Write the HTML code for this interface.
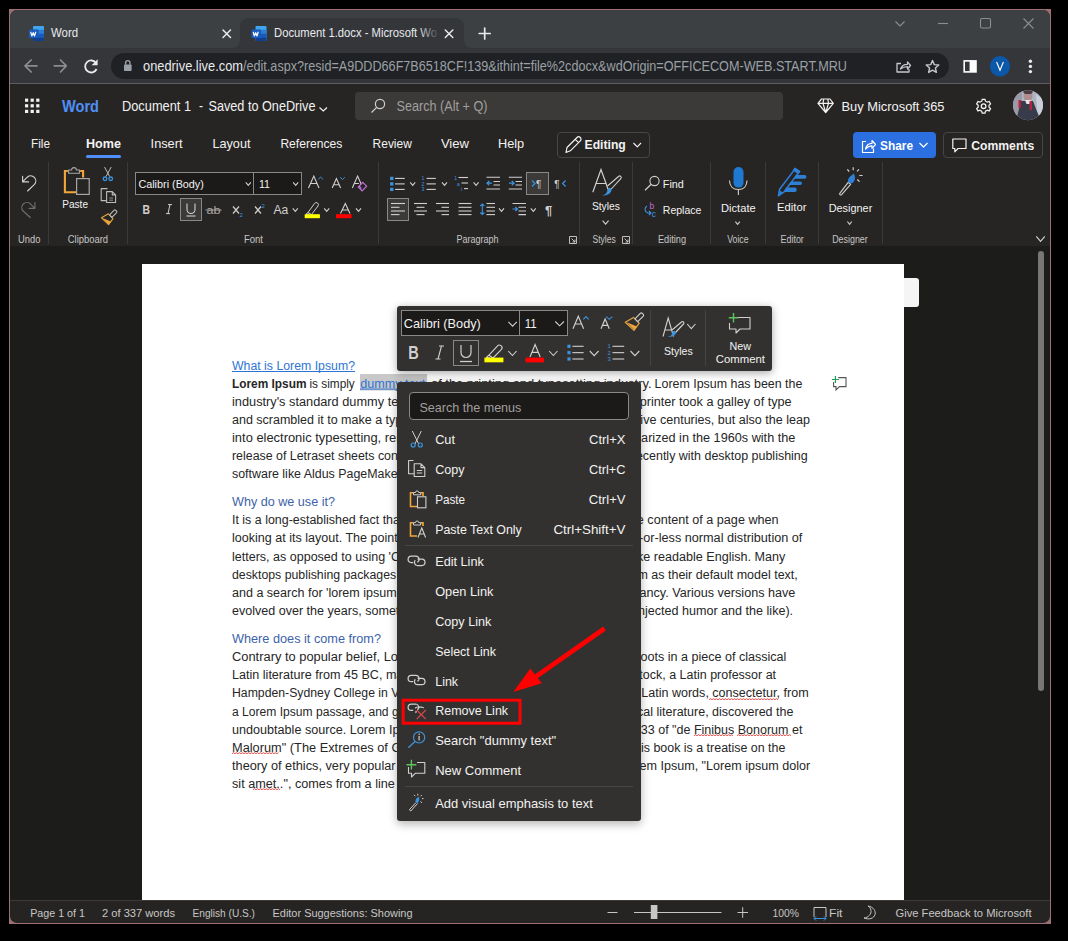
<!DOCTYPE html>
<html><head><meta charset="utf-8"><style>
html,body{margin:0;padding:0;background:#000;}
body{width:1068px;height:941px;overflow:hidden;position:relative;font-family:"Liberation Sans", sans-serif;}
svg{position:absolute;left:0;top:0;overflow:visible;}
svg text{font-family:"Liberation Sans", sans-serif;}
</style></head><body>
<div style="position:absolute;left:9px;top:9px;width:1042px;height:915px;background:#9d6f73;"></div>
<div style="position:absolute;left:10px;top:10px;width:1040px;height:73px;background:#35363a;border-top-left-radius:7px;border-top-right-radius:7px;"></div>
<div style="position:absolute;left:10px;top:10px;width:1040px;height:16px;background:#3c4043;border-top-left-radius:7px;border-top-right-radius:7px;"></div>
<div style="position:absolute;left:10px;top:18px;width:230px;height:30px;background:#3c4043;border-bottom-right-radius:8px;"></div>
<div style="position:absolute;left:464px;top:18px;width:586px;height:30px;background:#3c4043;border-bottom-left-radius:8px;"></div>
<div style="position:absolute;left:240px;top:18px;width:224px;height:30px;background:#35363a;border-radius:8px 8px 0 0;"></div>
<div style="position:absolute;left:111px;top:53px;width:838px;height:26px;background:#202124;border-radius:13px;"></div>
<div style="position:absolute;left:10px;top:83px;width:1040px;height:1px;background:#5a5d61;"></div>
<div style="position:absolute;left:10px;top:84px;width:1040px;height:162px;background:#262524;"></div>
<div style="position:absolute;left:10px;top:246px;width:1040px;height:654px;background:#1c1c1b;"></div>
<div style="position:absolute;left:142px;top:264px;width:762px;height:636px;background:#ffffff;"></div>
<div style="position:absolute;left:904px;top:278px;width:15px;height:29px;background:#f5f5f5;border-radius:0 3px 3px 0;"></div>
<div style="position:absolute;left:1038px;top:251px;width:6px;height:440px;background:#797775;border-radius:3px;"></div>
<div style="position:absolute;left:10px;top:900px;width:1040px;height:23px;background:#252423;border-bottom-left-radius:7px;border-bottom-right-radius:7px;border-top:1px solid #3b3a39;box-sizing:border-box;"></div>
<div style="position:absolute;left:355px;top:92px;width:428px;height:28px;background:#3b3a39;border-radius:4px;"></div>
<div style="position:absolute;left:557px;top:132px;width:93px;height:26px;background:transparent;border:1px solid #484644;border-radius:4px;box-sizing:border-box;"></div>
<div style="position:absolute;left:853px;top:132px;width:83px;height:26px;background:#2b6fe0;border-radius:4px;"></div>
<div style="position:absolute;left:943px;top:132px;width:100px;height:26px;background:transparent;border:1px solid #484644;border-radius:4px;box-sizing:border-box;"></div>
<div style="position:absolute;left:135px;top:172px;width:119px;height:23px;background:#1b1a19;border:1px solid #8a8886;box-sizing:border-box;"></div>
<div style="position:absolute;left:253px;top:172px;width:49px;height:23px;background:#1b1a19;border:1px solid #8a8886;box-sizing:border-box;"></div>
<div style="position:absolute;left:180px;top:198px;width:22px;height:23px;background:#3b3a39;border:1px solid #8a8886;box-sizing:border-box;"></div>
<div style="position:absolute;left:387px;top:198px;width:22px;height:23px;background:#3b3a39;border:1px solid #8a8886;box-sizing:border-box;"></div>
<div style="position:absolute;left:526px;top:172px;width:23px;height:23px;background:#3b3a39;border:1px solid #8a8886;box-sizing:border-box;"></div>
<div style="position:absolute;left:48px;top:162px;width:1px;height:82px;background:#3b3a39;"></div>
<div style="position:absolute;left:127px;top:162px;width:1px;height:82px;background:#3b3a39;"></div>
<div style="position:absolute;left:378px;top:162px;width:1px;height:82px;background:#3b3a39;"></div>
<div style="position:absolute;left:579px;top:162px;width:1px;height:82px;background:#3b3a39;"></div>
<div style="position:absolute;left:632px;top:162px;width:1px;height:82px;background:#3b3a39;"></div>
<div style="position:absolute;left:710px;top:162px;width:1px;height:82px;background:#3b3a39;"></div>
<div style="position:absolute;left:765px;top:162px;width:1px;height:82px;background:#3b3a39;"></div>
<div style="position:absolute;left:818px;top:162px;width:1px;height:82px;background:#3b3a39;"></div>
<div style="position:absolute;left:882px;top:162px;width:1px;height:82px;background:#3b3a39;"></div>
<div style="position:absolute;left:86px;top:155px;width:35px;height:3px;background:#4f8ff7;border-radius:2px;"></div>
<svg width="1068" height="941" viewBox="0 0 1068 941">
<defs><clipPath id="clipL"><rect x="0" y="0" width="397" height="941"/></clipPath><clipPath id="clipR"><rect x="397" y="0" width="671" height="941"/></clipPath></defs>
<g transform="translate(29,26)">
<rect x="4" y="0" width="11" height="15" rx="1" fill="#41a5ee"/>
<rect x="4" y="3.75" width="11" height="3.75" fill="#2b7cd3"/>
<rect x="4" y="7.5" width="11" height="3.75" fill="#185abd"/>
<rect x="4" y="11.25" width="11" height="3.75" rx="0.8" fill="#103f91"/>
<rect x="0" y="3.5" width="9.5" height="8.5" rx="1" fill="#185abd"/>
<path d="M1.7 5.8 L2.9 10 L4.2 6.6 L5.5 10 L6.8 5.8" stroke="#fff" stroke-width="1.2" fill="none" stroke-linejoin="round"/>
</g>
<g transform="translate(251.5,26)">
<rect x="4" y="0" width="11" height="15" rx="1" fill="#41a5ee"/>
<rect x="4" y="3.75" width="11" height="3.75" fill="#2b7cd3"/>
<rect x="4" y="7.5" width="11" height="3.75" fill="#185abd"/>
<rect x="4" y="11.25" width="11" height="3.75" rx="0.8" fill="#103f91"/>
<rect x="0" y="3.5" width="9.5" height="8.5" rx="1" fill="#185abd"/>
<path d="M1.7 5.8 L2.9 10 L4.2 6.6 L5.5 10 L6.8 5.8" stroke="#fff" stroke-width="1.2" fill="none" stroke-linejoin="round"/>
</g>
<g stroke="#e8eaed" stroke-width="1.5" stroke-linecap="round">
<path d="M223 30 L230.5 37.5 M230.5 30 L223 37.5"/>
<path d="M445.3 30 L452.8 37.5 M452.8 30 L445.3 37.5"/>
<path d="M484.7 28 V39 M479.2 33.5 H490.2" stroke-width="1.7"/>
</g>
<g stroke="#8b8e92" stroke-width="1.1" fill="none">
<path d="M895.5 21.5 L900 26 L904.5 21.5"/>
<path d="M938 23.5 H948"/>
<rect x="980.5" y="18.5" width="10" height="9.5" rx="1.5"/>
<path d="M1023.5 18.5 L1033.5 28.5 M1033.5 18.5 L1023.5 28.5"/>
</g>
<g stroke="#8a8c90" stroke-width="1.7" fill="none" stroke-linecap="round" stroke-linejoin="round">
<path d="M37 65.8 H25 M31.2 60 L25 65.8 L31.2 72"/>
<path d="M54.3 65.8 H66.3 M60.5 60 L66.3 65.8 L60.5 72"/>
</g>
<path d="M96.2 63.2 A6 6 0 1 0 96.6 69" stroke="#e8eaed" stroke-width="1.8" fill="none"/>
<path d="M97.6 59.2 V65.2 H91.6 Z" fill="#e8eaed"/>
<g fill="#9aa0a6">
<rect x="124" y="64.5" width="7.6" height="6.5" rx="0.8"/>
</g>
<path d="M125.6 64.8 V62.8 A2.2 2.2 0 0 1 130 62.8 V64.8" stroke="#9aa0a6" stroke-width="1.4" fill="none"/>
<g stroke="#c4c7cb" stroke-width="1.3" fill="none" stroke-linejoin="round">
<path d="M901 63.5 H897 V72 H909 V69"/>
<path d="M900.5 69 C901.5 65.5 904 64.3 907.5 64.3 V61.8 L910.5 65.5 L907.5 69 V66.6 C904.5 66.6 902.5 67.3 900.5 69 Z"/>
<path d="M932.5 60.5 L934.3 64.6 L938.8 65 L935.4 68 L936.4 72.4 L932.5 70.1 L928.6 72.4 L929.6 68 L926.2 65 L930.7 64.6 Z" stroke-width="1.4"/>
</g>
<rect x="964.2" y="60.9" width="11.8" height="11" fill="none" stroke="#fff" stroke-width="1.6"/>
<rect x="969.6" y="60.9" width="6.4" height="11" fill="#fff"/>
<circle cx="1000" cy="66.2" r="10.2" fill="#0b57a8"/>
<path d="M996.6 62 L1000 70.3 L1003.4 62" stroke="#fff" stroke-width="1.1" fill="none"/>
<g fill="#e8eaed"><circle cx="1030.4" cy="61.2" r="1.7"/><circle cx="1030.4" cy="66.4" r="1.7"/><circle cx="1030.4" cy="71.6" r="1.7"/></g>

<g fill="#f3f2f1">
<rect x="25.0" y="98.6" width="3.2" height="3.2"/><rect x="25.0" y="104.2" width="3.2" height="3.2"/><rect x="25.0" y="109.8" width="3.2" height="3.2"/><rect x="30.6" y="98.6" width="3.2" height="3.2"/><rect x="30.6" y="104.2" width="3.2" height="3.2"/><rect x="30.6" y="109.8" width="3.2" height="3.2"/><rect x="36.2" y="98.6" width="3.2" height="3.2"/><rect x="36.2" y="104.2" width="3.2" height="3.2"/><rect x="36.2" y="109.8" width="3.2" height="3.2"/>
</g>
<path d="M319.5 107.5 L323.3 111 L327 107.5" stroke="#f3f2f1" stroke-width="1.2" fill="none"/>
<g stroke="#d2d0ce" stroke-width="1.2" fill="none">
<circle cx="380" cy="104" r="4.6"/>
<path d="M376.7 107.3 L371.5 112.5"/>
</g>
<g stroke="#f3f2f1" stroke-width="1.2" fill="none" stroke-linejoin="round">
<path d="M821.5 99 H830 L833.3 103.3 L825.7 112.5 L818 103.3 Z M818 103.3 H833.3 M823 103.3 L825.7 112.5 L828.5 103.3 M823.7 99 L823 103.3 M827.8 99 L828.5 103.3"/>
</g>
<g transform="translate(983.6,106.2) scale(0.88)" stroke="#f3f2f1" stroke-width="1.5" fill="none">
<circle r="2.6"/>
<path d="M-1.6 -7.6 L1.6 -7.6 L2.3 -5.3 L4.4 -4.1 L6.7 -4.9 L8.3 -2.1 L6.5 -0.5 L6.5 1.9 L8.3 3.5 L6.7 6.3 L4.4 5.5 L2.3 6.7 L1.6 9 L-1.6 9 L-2.3 6.7 L-4.4 5.5 L-6.7 6.3 L-8.3 3.5 L-6.5 1.9 L-6.5 -0.5 L-8.3 -2.1 L-6.7 -4.9 L-4.4 -4.1 L-2.3 -5.3 Z" transform="scale(0.95) translate(0,-0.7)"/>
</g>
<defs>
<clipPath id="av"><circle cx="1028" cy="105.2" r="15"/></clipPath>
<filter id="blr" x="-20%" y="-20%" width="140%" height="140%"><feGaussianBlur stdDeviation="0.7"/></filter>
</defs>
<g clip-path="url(#av)">
<rect x="1012" y="90" width="32" height="31" fill="#aeb5c2"/>
<g filter="url(#blr)">
<rect x="1012" y="90" width="10" height="31" fill="#9a9aa6"/>
<path d="M1036 94 L1044 100 L1044 121 L1038 121 Z" fill="#c9d0dc"/>
<ellipse cx="1028" cy="96" rx="4.5" ry="6" fill="#b08d8f"/>
<path d="M1023 92 C1025 89 1031 89 1033 92 L1031 94 L1025 94 Z" fill="#4a3a40"/>
<path d="M1021 101 L1033 101 L1036 109 L1041 121 L1016 121 L1019 109 Z" fill="#383a4a"/>
<path d="M1025 100 L1031 100 L1029.5 104 L1026.5 104 Z" fill="#e6e6ea"/>
<rect x="1018.5" y="100" width="2.5" height="8" fill="#b5203c"/>
<rect x="1029.5" y="101" width="2.5" height="9" fill="#b5203c"/>
</g>
</g>

<g stroke="#f3f2f1" stroke-width="1.2" fill="none" stroke-linejoin="round">
<path d="M566 152.5 L567 147.5 L577 137.5 A1.8 1.8 0 0 1 580.3 140.8 L570.3 150.8 Z M575.3 139.3 L578.6 142.6"/>
<path d="M633.5 143 L637.3 146.8 L641 143"/>
</g>
<g stroke="#fff" stroke-width="1.2" fill="none" stroke-linejoin="round">
<g transform="translate(0,1)"><path d="M866 140.5 H862.5 V151.5 H873.5 V147.5"/>
<path d="M865.5 148 C866.5 143.5 869 142.3 872 142.3 V139.5 L875.5 143.5 L872 147.3 V144.8 C869.5 144.8 867.5 145.8 865.5 148 Z"/></g>
<path d="M919.5 143 L923.5 147 L927.5 143"/>
</g>
<g stroke="#f3f2f1" stroke-width="1.2" fill="none" stroke-linejoin="round">
<path d="M952.8 139 H966 V148.5 H958 L954.8 151.8 V148.5 H952.8 Z"/>
</g>

<g stroke="#d2d0ce" stroke-width="1.15" fill="none" stroke-linecap="round" stroke-linejoin="round">
<path d="M22.6 176.3 V181.9 H28.6 M22.6 181.9 L27.3 177.2 A5.1 5.1 0 0 1 34.5 184.4 L27.6 191"/>
</g>
<g stroke="#6f6e6d" stroke-width="1.15" fill="none" stroke-linecap="round" stroke-linejoin="round">
<path d="M34.9 202.5 V208.4 H29.1 M34.9 208.4 L30.3 203.8 A5.1 5.1 0 0 0 23.1 211 L30.3 217.5"/>
</g>
<!-- paste -->
<path d="M67.8 171 H64.9 V192.3 H76" stroke="#f2a63a" stroke-width="2.1" fill="none"/>
<path d="M80.2 171 H83.1 V177.5" stroke="#f2a63a" stroke-width="2.1" fill="none"/>
<path d="M68.6 173.3 V170 H71.6 A2.4 2.4 0 0 1 76.4 170 H79.4 V173.3 Z" stroke="#a8a6a4" stroke-width="1.1" fill="#262524"/>
<rect x="76.6" y="178.6" width="12.6" height="15.8" stroke="#a8a6a4" stroke-width="1.2" fill="#262524"/>
<!-- scissors -->
<g stroke="#bdbbb9" stroke-width="1" fill="none">
<path d="M104.5 167 L109.7 176.6 M111.2 167 L106 176.6"/>
</g>
<g stroke="#3b94e0" stroke-width="1.3" fill="none"><circle cx="105" cy="178.8" r="1.8"/><circle cx="110.7" cy="178.8" r="1.8"/></g>
<!-- copy -->
<g stroke="#bdbbb9" stroke-width="1.1" fill="none" stroke-linejoin="round">
<path d="M107.5 188.6 H101.2 V200.6 H106.3"/>
<path d="M106.6 191.6 H112.3 L115.6 194.9 V202.5 H106.6 Z M112.3 191.6 V194.9 H115.6"/>
</g>
<path d="M109.3 198 H113 M109.3 200.2 H113" stroke="#9f9d9b" stroke-width="0.9"/>
<!-- format painter -->
<path d="M102.5 217.9 L108.6 224.2 L110.8 221.6 Z" fill="#f2a63a"/>
<path d="M101.5 217.8 L108.3 213.8 L113 218.6 L108.6 224.6 Z" stroke="#e9a640" stroke-width="1.1" fill="none" stroke-linejoin="round"/>
<path d="M109.6 214.9 L114.2 210.2 Q115 209.6 115.8 210.4 L116.6 211.2 Q117.2 212 116.6 212.7 L111.9 217.3 Z" stroke="#bdbbb9" stroke-width="1.1" fill="#262524" stroke-linejoin="round"/>
<!-- font box chevrons -->
<path d="M245.8 182.4 L248.3 185.4 L250.8 182.4" stroke="#d2d0ce" stroke-width="1.1" fill="none"/>
<path d="M293.2 182.4 L295.7 185.4 L298.2 182.4" stroke="#d2d0ce" stroke-width="1.1" fill="none"/>
<!-- B I U -->
<text x="142.6" y="213.7" font-size="13.4" font-weight="700" fill="#d2d0ce" textLength="7.5" lengthAdjust="spacingAndGlyphs">B</text>
<path d="M168 204.6 H172 M166 213.6 H170 M170 204.6 L168 213.6" stroke="#d2d0ce" stroke-width="1" fill="none"/>
<path d="M187 203.5 V209.5 A4 4 0 0 0 195 209.5 V203.5" stroke="#d2d0ce" stroke-width="1.1" fill="none"/>
<path d="M186.5 216 H195.5" stroke="#d2d0ce" stroke-width="1.1"/>
<text x="206.5" y="213.5" font-size="10" fill="#a8a6a4" textLength="14" lengthAdjust="spacingAndGlyphs">ab</text>
<path d="M205.5 210 H221.5" stroke="#a8a6a4" stroke-width="1"/>
<path d="M233 206.5 L239 213.5 M239 206.5 L233 213.5" stroke="#d2d0ce" stroke-width="1.2"/>
<text x="239.6" y="217.3" font-size="6" fill="#3b94e0">2</text>
<path d="M255 206.5 L261 213.5 M261 206.5 L255 213.5" stroke="#d2d0ce" stroke-width="1.2"/>
<text x="261.5" y="207.5" font-size="6" fill="#3b94e0">2</text>
<text x="273.5" y="213.7" font-size="12" fill="#d2d0ce" textLength="14.8" lengthAdjust="spacingAndGlyphs">Aa</text>
<path d="M292.8 208.3 L295.3 211.3 L297.8 208.3" stroke="#d2d0ce" stroke-width="1.1" fill="none"/>
<!-- highlighter -->
<path d="M308 212.5 L314.5 203.5 A1.6 1.6 0 0 1 318 206 L311.5 214.5 Z M307.8 212.5 L306.2 214 L309 214.2" stroke="#d2d0ce" stroke-width="1" fill="none" stroke-linejoin="round"/>
<rect x="304.7" y="214.2" width="15.2" height="4" fill="#ffff00"/>
<path d="M324.2 208.3 L326.7 211.3 L329.2 208.3" stroke="#d2d0ce" stroke-width="1.1" fill="none"/>
<path d="M340.5 213.6 L345.3 203.5 L350 213.6 M342.3 210 H348.3" stroke="#d2d0ce" stroke-width="1.1" fill="none"/>
<rect x="336" y="214.2" width="15.5" height="4" fill="#ff0000"/>
<path d="M356 208.3 L358.5 211.3 L361 208.3" stroke="#d2d0ce" stroke-width="1.1" fill="none"/>
<!-- grow / shrink / clear -->
<path d="M308.5 188 L313.8 176 L319 188 M310.5 183.5 H317" stroke="#d2d0ce" stroke-width="1.1" fill="none"/>
<path d="M318.3 179.3 L320.6 177.1 L322.9 179.3" stroke="#3b94e0" stroke-width="1" fill="none"/>
<path d="M332.2 188 L336.4 178.5 L340.6 188 M333.8 184.8 H339" stroke="#d2d0ce" stroke-width="1.1" fill="none"/>
<path d="M340.2 177.3 L342.5 179.5 L344.8 177.3" stroke="#3b94e0" stroke-width="1" fill="none"/>
<path d="M352.3 188 L357.6 176 L362.9 188 M354.5 183.5 H359" stroke="#d2d0ce" stroke-width="1.1" fill="none"/>
<path d="M358.3 187 L362.8 182.4 L366.6 186.2 L362.1 190.8 Z" stroke="#c06fd6" stroke-width="1.2" fill="#262524"/>
<path d="M359 186.2 L361.3 188.5" stroke="#c06fd6" stroke-width="1.5"/>
<!-- paragraph row1 -->
<rect x="390.1" y="176.75" width="3.3" height="3.3" fill="#3b94e0"/><path d="M395.1 178.4 H404.70000000000005" stroke="#d2d0ce" stroke-width="1.1"/><rect x="390.1" y="182.25" width="3.3" height="3.3" fill="#3b94e0"/><path d="M395.1 183.9 H404.70000000000005" stroke="#d2d0ce" stroke-width="1.1"/><rect x="390.1" y="187.75" width="3.3" height="3.3" fill="#3b94e0"/><path d="M395.1 189.4 H404.70000000000005" stroke="#d2d0ce" stroke-width="1.1"/>
<path d="M410.2 182.4 L412.7 185.4 L415.2 182.4" stroke="#d2d0ce" stroke-width="1.1" fill="none"/>
<text transform="translate(421.6,180.27) scale(0.25)" font-size="20.8" fill="#3b94e0">1</text><path d="M426.6 178.4 H435.8" stroke="#d2d0ce" stroke-width="1.1"/><text transform="translate(421.6,185.77) scale(0.25)" font-size="20.8" fill="#3b94e0">2</text><path d="M426.6 183.9 H435.8" stroke="#d2d0ce" stroke-width="1.1"/><text transform="translate(421.6,191.27) scale(0.25)" font-size="20.8" fill="#3b94e0">3</text><path d="M426.6 189.4 H435.8" stroke="#d2d0ce" stroke-width="1.1"/>
<path d="M442 182.4 L444.5 185.4 L447 182.4" stroke="#d2d0ce" stroke-width="1.1" fill="none"/>
<text x="454.3" y="180" font-size="5" fill="#3b94e0">1</text>
<path d="M458.5 177.5 H468" stroke="#d2d0ce" stroke-width="1.1"/>
<text x="457" y="185.5" font-size="5" fill="#3b94e0">a</text>
<path d="M461.5 183 H468" stroke="#d2d0ce" stroke-width="1.1"/>
<text x="461" y="191" font-size="5" fill="#3b94e0">i</text>
<path d="M464 188.6 H468" stroke="#d2d0ce" stroke-width="1.1"/>
<path d="M473.6 182.4 L476.1 185.4 L478.6 182.4" stroke="#d2d0ce" stroke-width="1.1" fill="none"/>
<path d="M486.5 177.3 H500 M486.5 189 H500 M493.5 181.5 H500 M493.5 185 H500" stroke="#d2d0ce" stroke-width="1.1"/>
<path d="M492 183.2 H487 M489.3 181 L487 183.2 L489.3 185.4" stroke="#3b94e0" stroke-width="1.2" fill="none"/>
<path d="M508.8 177.3 H522 M508.8 189 H522 M515.5 181.5 H522 M515.5 185 H522" stroke="#d2d0ce" stroke-width="1.1"/>
<path d="M509 183.2 H514 M511.8 181 L514 183.2 L511.8 185.4" stroke="#3b94e0" stroke-width="1.2" fill="none"/>
<path d="M532 180.5 L535 183.5 L532 186.5" stroke="#3b94e0" stroke-width="1.2" fill="none"/>
<text x="536" y="187.8" font-size="10" fill="#d2d0ce">¶</text>
<text x="554.3" y="187.8" font-size="10" fill="#d2d0ce">¶</text>
<path d="M565.6 180.5 L562.6 183.5 L565.6 186.5" stroke="#3b94e0" stroke-width="1.2" fill="none"/>
<!-- paragraph row2 -->
<path d="M391 203.5 H405" stroke="#d2d0ce" stroke-width="1.1"/><path d="M391 207.3 H399.5" stroke="#d2d0ce" stroke-width="1.1"/><path d="M391 211 H405" stroke="#d2d0ce" stroke-width="1.1"/><path d="M391 214.6 H399.5" stroke="#d2d0ce" stroke-width="1.1"/>
<path d="M414 203.5 H427" stroke="#d2d0ce" stroke-width="1.1"/><path d="M416.5 207.3 H424.5" stroke="#d2d0ce" stroke-width="1.1"/><path d="M414 211 H427" stroke="#d2d0ce" stroke-width="1.1"/><path d="M416.5 214.6 H424.5" stroke="#d2d0ce" stroke-width="1.1"/>
<path d="M436 203.5 H449" stroke="#d2d0ce" stroke-width="1.1"/><path d="M441.5 207.3 H449" stroke="#d2d0ce" stroke-width="1.1"/><path d="M436 211 H449" stroke="#d2d0ce" stroke-width="1.1"/><path d="M441.5 214.6 H449" stroke="#d2d0ce" stroke-width="1.1"/>
<path d="M458.5 203.5 H471.5" stroke="#d2d0ce" stroke-width="1.1"/><path d="M458.5 207.3 H471.5" stroke="#d2d0ce" stroke-width="1.1"/><path d="M458.5 211 H471.5" stroke="#d2d0ce" stroke-width="1.1"/><path d="M458.5 214.6 H471.5" stroke="#d2d0ce" stroke-width="1.1"/>
<path d="M482.3 204 V214.5 M480.3 206 L482.3 204 L484.3 206 M480.3 212.5 L482.3 214.5 L484.3 212.5" stroke="#3b94e0" stroke-width="1.1" fill="none"/>
<path d="M486.5 203.5 H495" stroke="#d2d0ce" stroke-width="1.1"/><path d="M486.5 207.3 H495" stroke="#d2d0ce" stroke-width="1.1"/><path d="M486.5 211 H495" stroke="#d2d0ce" stroke-width="1.1"/><path d="M486.5 214.6 H495" stroke="#d2d0ce" stroke-width="1.1"/>
<path d="M499 208.3 L501.5 211.3 L504 208.3" stroke="#d2d0ce" stroke-width="1.1" fill="none"/>
<path d="M512.5 203.5 H526 M518.5 207.3 H526 M518.5 211 H526 M518.5 214.6 H526" stroke="#d2d0ce" stroke-width="1.1"/>
<path d="M512.5 209 H517.5 M515.3 207 L517.5 209 L515.3 211" stroke="#3b94e0" stroke-width="1.2" fill="none"/>
<path d="M530.8 208.3 L533.3 211.3 L535.8 208.3" stroke="#d2d0ce" stroke-width="1.1" fill="none"/>
<text x="545" y="214.8" font-size="13" font-weight="700" fill="#d2d0ce">¶</text>
<!-- launchers -->
<g stroke="#d2d0ce" stroke-width="0.9" fill="none">
<path d="M569.5 243.5 V236.5 H576.5 V243.5 Z M571.5 238.5 L575 242 M575 239.5 V242 H572.5"/>
<path d="M622.5 243.5 V236.5 H629.5 V243.5 Z M624.5 238.5 L628 242 M628 239.5 V242 H625.5"/>
</g>
<!-- styles -->
<path d="M592.8 192.3 L601 169.5 L609.2 192.3 M596 183.5 H606" stroke="#d2d0ce" stroke-width="1.2" fill="none"/>
<path d="M607.5 186 L618.5 176.5 A1.5 1.5 0 0 1 620.8 178.6 L610.8 189.5" stroke="#d2d0ce" stroke-width="1.1" fill="#262524"/>
<path d="M601 195.5 C604 195.5 607 194 607.5 190 C608 187.5 610 187 611.3 189 C612 192.5 608.5 196 601 195.5 Z" fill="#3b94e0"/>
<path d="M602.6 220.6 L605.6 224.1 L608.6 220.6" stroke="#d2d0ce" stroke-width="1.1" fill="none"/>
<!-- find / replace -->
<circle cx="654.5" cy="181" r="4.6" stroke="#d2d0ce" stroke-width="1.1" fill="none"/>
<path d="M651.2 184.3 L645 190.2" stroke="#d2d0ce" stroke-width="1.2"/>
<text x="649.5" y="208.8" font-size="8.5" fill="#c06fd6">b</text>
<text x="651.8" y="217" font-size="8.5" fill="#3b94e0">c</text>
<path d="M647 206 C644 208 644.5 212 648 213 L651 213 M649 211 L651 213 L649 215" stroke="#3b94e0" stroke-width="1.1" fill="none"/>
<!-- mic -->
<rect x="733.5" y="167" width="10" height="20.6" rx="5" fill="#1f78d1"/>
<path d="M729.5 180.5 C729.5 186 733 189.5 738.4 189.5 C743.8 189.5 747 186 747 180.5 M738.4 189.5 V195" stroke="#d2d0ce" stroke-width="1.1" fill="none"/>
<path d="M735.4 221.6 L737.6 224.4 L739.8 221.6" stroke="#d2d0ce" stroke-width="1.1" fill="none"/>
<!-- editor -->
<path d="M778.4 195.8 L779.6 189.3 L795.3 168.6 L799.5 171.4 L783.8 192.2 Z" stroke="#2e7fd6" stroke-width="1.5" fill="none" stroke-linejoin="round"/>
<path d="M794.6 167.5 L800.6 171.5 L798.4 174.3 L792.6 170.3 Z" fill="#2e7fd6"/>
<path d="M779.8 190.5 L778.4 195.8 L783 192.7 Z" fill="#2e7fd6"/>
<path d="M796 175 H804.6 A1.85 1.85 0 0 1 804.6 178.7 H793.3 Z M791 181.4 H800.2 A1.8 1.8 0 0 1 800.2 185 H788.3 Z M786 187.6 H794.6 A2.2 2.2 0 0 1 794.6 192 H783.6 Z" fill="#2e7fd6"/>
<!-- designer -->
<path d="M839.6 193.6 L848.2 182.4 L850.6 184.3 L841.4 194.8 Q839.8 195.4 839.6 193.6 Z" stroke="#d2d0ce" stroke-width="1.1" fill="none" stroke-linejoin="round"/>
<path d="M848.3 182.3 C847.2 179.6 849.3 177 851.5 175.5 L853.7 173.4 C855.3 176 855.6 179.4 853.5 182 C852.3 183.6 850 184 848.3 182.3 Z" fill="#2e80d8"/>
<g stroke="#d2d0ce" stroke-width="1.2"><path d="M853.2 167.2 V170.2 M847.3 169.3 L849.2 171.5 M859 169.3 L857 171.3 M859.3 175.5 H862.6 M857.3 179.5 L859.5 181.7"/></g>
<path d="M847.4 221.5 L849.6 224.3 L851.8 221.5" stroke="#d2d0ce" stroke-width="1.1" fill="none"/>
<path d="M1036.3 236.3 L1040.55 241.3 L1044.8 236.3" stroke="#d2d0ce" stroke-width="1.2" fill="none"/>

<path d="M607.5 912.5 H617.5 M737.5 912.5 H748 M742.7 907.2 V917.8" stroke="#c8c6c4" stroke-width="1"/>
<path d="M634 912.5 H721.5" stroke="#c8c6c4" stroke-width="1"/>
<rect x="650.8" y="905" width="6.6" height="14" fill="#c8c6c4"/>
<path d="M814 917 V907.5 H826 V917" stroke="#c8c6c4" stroke-width="1" fill="none"/>
<path d="M814 918.5 H826 M814 918.5 L816 916.5 M814 918.5 L816 920.5 M826 918.5 L824 916.5 M826 918.5 L824 920.5" stroke="#3b94e0" stroke-width="1" fill="none"/>
<path d="M868 906 C873.5 907 876 911 875 914.5 C874 918.5 869 920 864 918 C868.5 917.5 871.5 914 871 910.5 C870.5 908 869.5 907 868 906 Z" stroke="#c8c6c4" stroke-width="1" fill="none"/>

<rect x="360" y="374" width="67" height="16.5" fill="#c8c8c8"/>
<path d="M838.2 377.6 H846 V386.6 H839.5 L836 390 V386.6 H833.6 V382" stroke="#555" stroke-width="1.1" fill="none"/>
<path d="M835.4 376 V383 M831.9 379.5 H838.9" stroke="#22a05a" stroke-width="1.2"/>
<path d="M709 699.7 L710.5 698.7 L712.0 699.7 L713.5 698.7 L715.0 699.7 L716.5 698.7 L718.0 699.7 L719.5 698.7 L721.0 699.7 L722.5 698.7 L724.0 699.7 L725.5 698.7 L727.0 699.7 L728.5 698.7 L730.0 699.7 L731.5 698.7 L733.0 699.7 L734.5 698.7 L736.0 699.7 L737.5 698.7 L739.0 699.7 L740.5 698.7 L742.0 699.7 L743.5 698.7 L745.0 699.7 L746.5 698.7 L748.0 699.7 L749.5 698.7 L751.0 699.7 L752.5 698.7 L754.0 699.7 L755.5 698.7 L757.0 699.7 L758.5 698.7 L760.0 699.7 L761.5 698.7 L763.0 699.7 L764.5 698.7 L766.0 699.7 L767.5 698.7 L769.0 699.7 L770.5 698.7 L772.0 699.7 L773.5 698.7 L775.0 699.7 L776.5 698.7 L778.0 699.7" stroke="#e53935" stroke-width="0.9" fill="none"/><path d="M694 735.7 L695.5 734.7 L697.0 735.7 L698.5 734.7 L700.0 735.7 L701.5 734.7 L703.0 735.7 L704.5 734.7 L706.0 735.7 L707.5 734.7 L709.0 735.7 L710.5 734.7 L712.0 735.7 L713.5 734.7 L715.0 735.7 L716.5 734.7 L718.0 735.7 L719.5 734.7 L721.0 735.7 L722.5 734.7 L724.0 735.7 L725.5 734.7 L727.0 735.7 L728.5 734.7 L730.0 735.7 L731.5 734.7 L733.0 735.7" stroke="#e53935" stroke-width="0.9" fill="none"/><path d="M737 735.7 L738.5 734.7 L740.0 735.7 L741.5 734.7 L743.0 735.7 L744.5 734.7 L746.0 735.7 L747.5 734.7 L749.0 735.7 L750.5 734.7 L752.0 735.7 L753.5 734.7 L755.0 735.7 L756.5 734.7 L758.0 735.7 L759.5 734.7 L761.0 735.7 L762.5 734.7 L764.0 735.7 L765.5 734.7 L767.0 735.7 L768.5 734.7 L770.0 735.7 L771.5 734.7 L773.0 735.7 L774.5 734.7 L776.0 735.7 L777.5 734.7 L779.0 735.7 L780.5 734.7 L782.0 735.7 L783.5 734.7 L785.0 735.7 L786.5 734.7 L788.0 735.7 L789.5 734.7 L791.0 735.7" stroke="#e53935" stroke-width="0.9" fill="none"/><path d="M232 753.7 L233.5 752.7 L235.0 753.7 L236.5 752.7 L238.0 753.7 L239.5 752.7 L241.0 753.7 L242.5 752.7 L244.0 753.7 L245.5 752.7 L247.0 753.7 L248.5 752.7 L250.0 753.7 L251.5 752.7 L253.0 753.7 L254.5 752.7 L256.0 753.7 L257.5 752.7 L259.0 753.7 L260.5 752.7 L262.0 753.7 L263.5 752.7 L265.0 753.7 L266.5 752.7 L268.0 753.7 L269.5 752.7 L271.0 753.7 L272.5 752.7 L274.0 753.7 L275.5 752.7 L277.0 753.7 L278.5 752.7" stroke="#e53935" stroke-width="0.9" fill="none"/><path d="M253 789.7 L254.5 788.7 L256.0 789.7 L257.5 788.7 L259.0 789.7 L260.5 788.7 L262.0 789.7 L263.5 788.7 L265.0 789.7 L266.5 788.7 L268.0 789.7 L269.5 788.7 L271.0 789.7 L272.5 788.7 L274.0 789.7 L275.5 788.7 L277.0 789.7 L278.5 788.7 L280.0 789.7" stroke="#e53935" stroke-width="0.9" fill="none"/><text x="51.0" y="36.7" font-size="12" fill="#e8eaed" textLength="27.0" lengthAdjust="spacingAndGlyphs" >Word</text>
<text x="274.0" y="36.7" font-size="12" fill="#e8eaed" textLength="163.0" lengthAdjust="spacingAndGlyphs" >Document 1.docx - Microsoft Wo</text>
<text x="143.0" y="70.7" font-size="14" fill="#e8eaed" textLength="100.0" lengthAdjust="spacingAndGlyphs" >onedrive.live.com</text>
<text x="243.0" y="70.7" font-size="14" fill="#9aa0a6" textLength="604.0" lengthAdjust="spacingAndGlyphs" >/edit.aspx?resid=A9DDD66F7B6518CF!139&amp;ithint=file%2cdocx&amp;wdOrigin=OFFICECOM-WEB.START.MRU</text>
<text x="62.0" y="112.0" font-size="16" fill="#4f8ff7" font-weight="700" textLength="37.0" lengthAdjust="spacingAndGlyphs" >Word</text>
<text x="122.0" y="111.3" font-size="14" fill="#f3f2f1" textLength="69.0" lengthAdjust="spacingAndGlyphs" >Document 1</text>
<text x="199.0" y="111.3" font-size="14" fill="#f3f2f1" textLength="4.0" lengthAdjust="spacingAndGlyphs" >-</text>
<text x="208.5" y="111.3" font-size="14" fill="#f3f2f1" textLength="107.0" lengthAdjust="spacingAndGlyphs" >Saved to OneDrive</text>
<text x="396.5" y="111.2" font-size="14" fill="#a19f9d" textLength="91.0" lengthAdjust="spacingAndGlyphs" >Search (Alt + Q)</text>
<text x="841.5" y="110.6" font-size="13" fill="#f3f2f1" textLength="103.0" lengthAdjust="spacingAndGlyphs" >Buy Microsoft 365</text>
<text x="31.0" y="147.7" font-size="13" fill="#f3f2f1" textLength="19.0" lengthAdjust="spacingAndGlyphs" >File</text>
<text x="86.0" y="147.7" font-size="13" fill="#f3f2f1" font-weight="700" textLength="35.0" lengthAdjust="spacingAndGlyphs" >Home</text>
<text x="150.6" y="147.7" font-size="13" fill="#f3f2f1" textLength="31.9" lengthAdjust="spacingAndGlyphs" >Insert</text>
<text x="212.4" y="147.7" font-size="13" fill="#f3f2f1" textLength="38.1" lengthAdjust="spacingAndGlyphs" >Layout</text>
<text x="280.4" y="147.7" font-size="13" fill="#f3f2f1" textLength="61.8" lengthAdjust="spacingAndGlyphs" >References</text>
<text x="372.6" y="147.7" font-size="13" fill="#f3f2f1" textLength="39.2" lengthAdjust="spacingAndGlyphs" >Review</text>
<text x="440.9" y="147.7" font-size="13" fill="#f3f2f1" textLength="28.1" lengthAdjust="spacingAndGlyphs" >View</text>
<text x="498.0" y="147.7" font-size="13" fill="#f3f2f1" textLength="26.2" lengthAdjust="spacingAndGlyphs" >Help</text>
<text x="584.5" y="149.3" font-size="13" fill="#f3f2f1" font-weight="700" textLength="41.3" lengthAdjust="spacingAndGlyphs" >Editing</text>
<text x="880.0" y="149.5" font-size="13" fill="#ffffff" font-weight="700" textLength="33.0" lengthAdjust="spacingAndGlyphs" >Share</text>
<text x="971.2" y="149.5" font-size="13" fill="#f3f2f1" font-weight="700" textLength="63.0" lengthAdjust="spacingAndGlyphs" >Comments</text>
<text x="62.3" y="207.5" font-size="11" fill="#f3f2f1" textLength="25.7" lengthAdjust="spacingAndGlyphs" >Paste</text>
<text x="138.4" y="188.0" font-size="11.5" fill="#f3f2f1" textLength="65.5" lengthAdjust="spacingAndGlyphs" >Calibri (Body)</text>
<text x="259.0" y="188.0" font-size="11" fill="#f3f2f1" textLength="11.0" lengthAdjust="spacingAndGlyphs" >11</text>
<text x="591.9" y="210.3" font-size="11" fill="#f3f2f1" textLength="28.0" lengthAdjust="spacingAndGlyphs" >Styles</text>
<text x="662.8" y="188.1" font-size="11" fill="#f3f2f1" textLength="21.0" lengthAdjust="spacingAndGlyphs" >Find</text>
<text x="662.8" y="214.0" font-size="11" fill="#f3f2f1" textLength="38.6" lengthAdjust="spacingAndGlyphs" >Replace</text>
<text x="721.0" y="211.6" font-size="11" fill="#f3f2f1" textLength="34.7" lengthAdjust="spacingAndGlyphs" >Dictate</text>
<text x="777.0" y="210.7" font-size="11" fill="#f3f2f1" textLength="29.4" lengthAdjust="spacingAndGlyphs" >Editor</text>
<text x="828.7" y="211.6" font-size="11" fill="#f3f2f1" textLength="43.6" lengthAdjust="spacingAndGlyphs" >Designer</text>
<text x="18.0" y="242.8" font-size="10" fill="#c8c6c4" textLength="22.4" lengthAdjust="spacingAndGlyphs" >Undo</text>
<text x="67.8" y="242.8" font-size="10" fill="#c8c6c4" textLength="40.2" lengthAdjust="spacingAndGlyphs" >Clipboard</text>
<text x="244.0" y="242.8" font-size="10" fill="#c8c6c4" textLength="19.0" lengthAdjust="spacingAndGlyphs" >Font</text>
<text x="456.4" y="242.8" font-size="10" fill="#c8c6c4" textLength="42.0" lengthAdjust="spacingAndGlyphs" >Paragraph</text>
<text x="592.6" y="242.8" font-size="10" fill="#c8c6c4" textLength="23.1" lengthAdjust="spacingAndGlyphs" >Styles</text>
<text x="657.9" y="242.8" font-size="10" fill="#c8c6c4" textLength="28.1" lengthAdjust="spacingAndGlyphs" >Editing</text>
<text x="727.2" y="242.8" font-size="10" fill="#c8c6c4" textLength="21.4" lengthAdjust="spacingAndGlyphs" >Voice</text>
<text x="780.6" y="242.8" font-size="10" fill="#c8c6c4" textLength="23.2" lengthAdjust="spacingAndGlyphs" >Editor</text>
<text x="832.2" y="242.8" font-size="10" fill="#c8c6c4" textLength="35.6" lengthAdjust="spacingAndGlyphs" >Designer</text>
<text x="30.2" y="916.9" font-size="11" fill="#c8c6c4" textLength="54.8" lengthAdjust="spacingAndGlyphs" >Page 1 of 1</text>
<text x="102.0" y="916.9" font-size="11" fill="#c8c6c4" textLength="73.0" lengthAdjust="spacingAndGlyphs" >2 of 337 words</text>
<text x="192.5" y="916.9" font-size="11" fill="#c8c6c4" textLength="62.5" lengthAdjust="spacingAndGlyphs" >English (U.S.)</text>
<text x="272.5" y="916.9" font-size="11" fill="#c8c6c4" textLength="140.0" lengthAdjust="spacingAndGlyphs" >Editor Suggestions: Showing</text>
<text x="772.5" y="916.9" font-size="11" fill="#c8c6c4" textLength="26.5" lengthAdjust="spacingAndGlyphs" >100%</text>
<text x="829.0" y="916.9" font-size="11" fill="#c8c6c4" textLength="13.5" lengthAdjust="spacingAndGlyphs" >Fit</text>
<text x="895.5" y="916.9" font-size="11" fill="#c8c6c4" textLength="136.0" lengthAdjust="spacingAndGlyphs" >Give Feedback to Microsoft</text>
<text x="232.0" y="387.5" font-size="12.5" fill="#262626" font-weight="700" textLength="74.5" lengthAdjust="spacingAndGlyphs" >Lorem Ipsum</text>
<text x="309.5" y="387.5" font-size="12.5" fill="#262626" textLength="45.2" lengthAdjust="spacingAndGlyphs" >is simply</text>
<text x="360.3" y="387.5" font-size="12.5" fill="#2e74d6" textLength="65.0" lengthAdjust="spacingAndGlyphs" >dummy text</text>
<text x="431.0" y="387.5" font-size="12.5" fill="#262626" textLength="220.5" lengthAdjust="spacingAndGlyphs" >of the printing and typesetting industry.</text>
<text x="654.6" y="387.5" font-size="12.5" fill="#262626" textLength="147.8" lengthAdjust="spacingAndGlyphs" >Lorem Ipsum has been the</text>
<text x="232.0" y="405.6" font-size="12.5" fill="#262626" textLength="564.3" lengthAdjust="spacingAndGlyphs" clip-path="url(#clipL)">industry&#x27;s standard dummy text ever since the 1500s, when an unknown printer took a galley of type</text>
<text x="232.0" y="405.6" font-size="12.5" fill="#262626" textLength="559.6" lengthAdjust="spacingAndGlyphs" clip-path="url(#clipR)">industry&#x27;s standard dummy text ever since the 1500s, when an unknown printer took a galley of type</text>
<text x="232.0" y="423.6" font-size="12.5" fill="#262626" textLength="575.4" lengthAdjust="spacingAndGlyphs" clip-path="url(#clipL)">and scrambled it to make a type specimen book. It has survived not only five centuries, but also the leap</text>
<text x="232.0" y="423.6" font-size="12.5" fill="#262626" textLength="578.0" lengthAdjust="spacingAndGlyphs" clip-path="url(#clipR)">and scrambled it to make a type specimen book. It has survived not only five centuries, but also the leap</text>
<text x="232.0" y="441.6" font-size="12.5" fill="#262626" textLength="573.8" lengthAdjust="spacingAndGlyphs" clip-path="url(#clipL)">into electronic typesetting, remaining essentially unchanged. It was popularized in the 1960s with the</text>
<text x="232.0" y="441.6" font-size="12.5" fill="#262626" textLength="563.3" lengthAdjust="spacingAndGlyphs" clip-path="url(#clipR)">into electronic typesetting, remaining essentially unchanged. It was popularized in the 1960s with the</text>
<text x="232.0" y="459.7" font-size="12.5" fill="#262626" textLength="572.0" lengthAdjust="spacingAndGlyphs" clip-path="url(#clipL)">release of Letraset sheets containing Lorem Ipsum passages, and more recently with desktop publishing</text>
<text x="232.0" y="459.7" font-size="12.5" fill="#262626" textLength="575.7" lengthAdjust="spacingAndGlyphs" clip-path="url(#clipR)">release of Letraset sheets containing Lorem Ipsum passages, and more recently with desktop publishing</text>
<text x="232.0" y="477.8" font-size="12.5" fill="#262626" textLength="365.0" lengthAdjust="spacingAndGlyphs" clip-path="url(#clipL)">software like Aldus PageMaker including versions of Lorem Ipsum.</text>
<text x="232.0" y="477.8" font-size="12.5" fill="#262626" textLength="364.0" lengthAdjust="spacingAndGlyphs" clip-path="url(#clipR)">software like Aldus PageMaker including versions of Lorem Ipsum.</text>
<text x="232.0" y="524.4" font-size="12.5" fill="#262626" textLength="538.4" lengthAdjust="spacingAndGlyphs" clip-path="url(#clipL)">It is a long-established fact that a reader will be distracted by the readable content of a page when</text>
<text x="232.0" y="524.4" font-size="12.5" fill="#262626" textLength="546.6" lengthAdjust="spacingAndGlyphs" clip-path="url(#clipR)">It is a long-established fact that a reader will be distracted by the readable content of a page when</text>
<text x="232.0" y="542.4" font-size="12.5" fill="#262626" textLength="564.3" lengthAdjust="spacingAndGlyphs" clip-path="url(#clipL)">looking at its layout. The point of using Lorem Ipsum is that it has a more-or-less normal distribution of</text>
<text x="232.0" y="542.4" font-size="12.5" fill="#262626" textLength="570.4" lengthAdjust="spacingAndGlyphs" clip-path="url(#clipR)">looking at its layout. The point of using Lorem Ipsum is that it has a more-or-less normal distribution of</text>
<text x="232.0" y="560.5" font-size="12.5" fill="#262626" textLength="550.4" lengthAdjust="spacingAndGlyphs" clip-path="url(#clipL)">letters, as opposed to using &#x27;Content here, content here&#x27;, making it look like readable English. Many</text>
<text x="232.0" y="560.5" font-size="12.5" fill="#262626" textLength="553.4" lengthAdjust="spacingAndGlyphs" clip-path="url(#clipR)">letters, as opposed to using &#x27;Content here, content here&#x27;, making it look like readable English. Many</text>
<text x="232.0" y="578.5" font-size="12.5" fill="#262626" textLength="557.5" lengthAdjust="spacingAndGlyphs" clip-path="url(#clipL)">desktops publishing packages and web page editors now use Lorem Ipsum as their default model text,</text>
<text x="232.0" y="578.5" font-size="12.5" fill="#262626" textLength="565.8" lengthAdjust="spacingAndGlyphs" clip-path="url(#clipR)">desktops publishing packages and web page editors now use Lorem Ipsum as their default model text,</text>
<text x="232.0" y="596.6" font-size="12.5" fill="#262626" textLength="560.2" lengthAdjust="spacingAndGlyphs" clip-path="url(#clipL)">and a search for &#x27;lorem ipsum&#x27; will uncover many web sites still in their infancy. Various versions have</text>
<text x="232.0" y="596.6" font-size="12.5" fill="#262626" textLength="563.3" lengthAdjust="spacingAndGlyphs" clip-path="url(#clipR)">and a search for &#x27;lorem ipsum&#x27; will uncover many web sites still in their infancy. Various versions have</text>
<text x="232.0" y="614.6" font-size="12.5" fill="#262626" textLength="559.9" lengthAdjust="spacingAndGlyphs" clip-path="url(#clipL)">evolved over the years, sometimes by accident, sometimes on purpose (injected humor and the like).</text>
<text x="232.0" y="614.6" font-size="12.5" fill="#262626" textLength="561.1" lengthAdjust="spacingAndGlyphs" clip-path="url(#clipR)">evolved over the years, sometimes by accident, sometimes on purpose (injected humor and the like).</text>
<text x="232.0" y="661.3" font-size="12.5" fill="#262626" textLength="568.7" lengthAdjust="spacingAndGlyphs" clip-path="url(#clipL)">Contrary to popular belief, Lorem Ipsum is not simply random text. It has roots in a piece of classical</text>
<text x="232.0" y="661.3" font-size="12.5" fill="#262626" textLength="554.3" lengthAdjust="spacingAndGlyphs" clip-path="url(#clipR)">Contrary to popular belief, Lorem Ipsum is not simply random text. It has roots in a piece of classical</text>
<text x="232.0" y="679.4" font-size="12.5" fill="#262626" textLength="548.4" lengthAdjust="spacingAndGlyphs" clip-path="url(#clipL)">Latin literature from 45 BC, making it over 2000 years old. Richard McClintock, a Latin professor at</text>
<text x="232.0" y="679.4" font-size="12.5" fill="#262626" textLength="544.1" lengthAdjust="spacingAndGlyphs" clip-path="url(#clipR)">Latin literature from 45 BC, making it over 2000 years old. Richard McClintock, a Latin professor at</text>
<text x="232.0" y="697.4" font-size="12.5" fill="#262626" textLength="562.8" lengthAdjust="spacingAndGlyphs" clip-path="url(#clipL)">Hampden-Sydney College in Virginia, looked up one of the more obscure Latin words, consectetur, from</text>
<text x="232.0" y="697.4" font-size="12.5" fill="#262626" textLength="576.6" lengthAdjust="spacingAndGlyphs" clip-path="url(#clipR)">Hampden-Sydney College in Virginia, looked up one of the more obscure Latin words, consectetur, from</text>
<text x="232.0" y="715.5" font-size="12.5" fill="#262626" textLength="543.0" lengthAdjust="spacingAndGlyphs" clip-path="url(#clipL)">a Lorem Ipsum passage, and going through the cites of the word in classical literature, discovered the</text>
<text x="232.0" y="715.5" font-size="12.5" fill="#262626" textLength="561.4" lengthAdjust="spacingAndGlyphs" clip-path="url(#clipR)">a Lorem Ipsum passage, and going through the cites of the word in classical literature, discovered the</text>
<text x="232.0" y="733.5" font-size="12.5" fill="#262626" textLength="575.0" lengthAdjust="spacingAndGlyphs" clip-path="url(#clipL)">undoubtable source. Lorem Ipsum comes from sections 1.10.32 and 1.10.33 of &quot;de Finibus Bonorum et</text>
<text x="232.0" y="733.5" font-size="12.5" fill="#262626" textLength="570.4" lengthAdjust="spacingAndGlyphs" clip-path="url(#clipR)">undoubtable source. Lorem Ipsum comes from sections 1.10.32 and 1.10.33 of &quot;de Finibus Bonorum et</text>
<text x="232.0" y="751.6" font-size="12.5" fill="#262626" textLength="569.3" lengthAdjust="spacingAndGlyphs" clip-path="url(#clipL)">Malorum&quot; (The Extremes of Good and Evil) by Cicero, written in 45 BC. This book is a treatise on the</text>
<text x="232.0" y="751.6" font-size="12.5" fill="#262626" textLength="553.4" lengthAdjust="spacingAndGlyphs" clip-path="url(#clipR)">Malorum&quot; (The Extremes of Good and Evil) by Cicero, written in 45 BC. This book is a treatise on the</text>
<text x="232.0" y="769.6" font-size="12.5" fill="#262626" textLength="586.4" lengthAdjust="spacingAndGlyphs" clip-path="url(#clipL)">theory of ethics, very popular during the Renaissance. The first line of Lorem Ipsum, &quot;Lorem ipsum dolor</text>
<text x="232.0" y="769.6" font-size="12.5" fill="#262626" textLength="578.1" lengthAdjust="spacingAndGlyphs" clip-path="url(#clipR)">theory of ethics, very popular during the Renaissance. The first line of Lorem Ipsum, &quot;Lorem ipsum dolor</text>
<text x="232.0" y="787.7" font-size="12.5" fill="#262626" textLength="269.2" lengthAdjust="spacingAndGlyphs" clip-path="url(#clipL)">sit amet..&quot;, comes from a line in section 1.10.32.</text>
<text x="232.0" y="787.7" font-size="12.5" fill="#262626" textLength="268.0" lengthAdjust="spacingAndGlyphs" clip-path="url(#clipR)">sit amet..&quot;, comes from a line in section 1.10.32.</text>
<text x="232.0" y="370.0" font-size="12.5" fill="#2e74d6" textLength="123.0" lengthAdjust="spacingAndGlyphs" >What is Lorem Ipsum?</text>
<text x="232.0" y="506.0" font-size="12.5" fill="#3d63a8" textLength="103.0" lengthAdjust="spacingAndGlyphs" >Why do we use it?</text>
<text x="232.0" y="642.9" font-size="12.5" fill="#3d63a8" textLength="149.0" lengthAdjust="spacingAndGlyphs" >Where does it come from?</text><rect x="360" y="388.6" width="67" height="1" fill="#2e74d6"/><defs><linearGradient id="fade"><stop offset="0" stop-color="#35363a" stop-opacity="0"/><stop offset="1" stop-color="#35363a"/></linearGradient></defs><rect x="418" y="26" width="22" height="16" fill="url(#fade)"/>
</svg>
<div style="position:absolute;left:232px;top:371px;width:123px;height:1px;background:#2e74d6;"></div>
<div style="position:absolute;left:397px;top:306px;width:375px;height:65px;background:#323130;border-radius:3px;box-shadow:0 2px 8px rgba(0,0,0,.35);"></div>
<div style="position:absolute;left:401px;top:310px;width:119px;height:26px;background:#1b1a19;border:1px solid #8a8886;box-sizing:border-box;"></div>
<div style="position:absolute;left:519px;top:310px;width:49px;height:26px;background:#1b1a19;border:1px solid #8a8886;box-sizing:border-box;"></div>
<div style="position:absolute;left:453px;top:340px;width:26px;height:26px;background:#323130;border:1px solid #8a8886;box-sizing:border-box;"></div>
<div style="position:absolute;left:650px;top:310px;width:1px;height:56px;background:#454443;"></div>
<div style="position:absolute;left:705px;top:310px;width:1px;height:56px;background:#454443;"></div>
<div style="position:absolute;left:397px;top:382px;width:244px;height:439px;background:#323130;border-radius:3px;box-shadow:0 3px 10px rgba(0,0,0,.3);"></div>
<div style="position:absolute;left:409px;top:392px;width:220px;height:28px;background:#1b1a19;border:1px solid #8a8886;border-radius:4px;box-sizing:border-box;"></div>
<div style="position:absolute;left:405px;top:545px;width:228px;height:1px;background:#484644;"></div>
<div style="position:absolute;left:405px;top:786px;width:228px;height:1px;background:#484644;"></div>
<svg width="1068" height="941" viewBox="0 0 1068 941">

<path d="M508.4 321.8 L512.6 326.1 L516.8 321.8" stroke="#d2d0ce" stroke-width="1.1" fill="none"/>
<path d="M555.3 321.5 L559.5999999999999 325.8 L563.9 321.5" stroke="#d2d0ce" stroke-width="1.1" fill="none"/>
<path d="M573 328.8 L578.3 316.3 L583.6 328.8 M575 324 H581.6" stroke="#d2d0ce" stroke-width="1.15" fill="none"/>
<path d="M583.3 319.3 L586 316.6 L588.7 319.3" stroke="#3b94e0" stroke-width="1.1" fill="none"/>
<path d="M601 328.8 L605.1 319 L609.3 328.8 M602.7 325.3 H607.6" stroke="#d2d0ce" stroke-width="1.15" fill="none"/>
<path d="M606.3 316.6 L609.3 319.3 L612.3 316.6" stroke="#3b94e0" stroke-width="1.1" fill="none"/>
<path d="M626.6 322.3 L634.4 329.8 L637 326.6 Z" fill="#f2a63a"/>
<path d="M625.3 322.2 L633.5 317.4 L639.2 323.2 L634 330.4 Z" stroke="#e9a640" stroke-width="1.2" fill="none" stroke-linejoin="round"/>
<path d="M635 318.8 L640.5 313.2 Q641.4 312.5 642.3 313.4 L643.3 314.4 Q644 315.3 643.3 316.1 L637.7 321.6 Z" stroke="#d2d0ce" stroke-width="1.15" fill="#323130" stroke-linejoin="round"/>
<text x="408.3" y="359.2" font-size="18.5" font-weight="700" fill="#d2d0ce" textLength="10.5" lengthAdjust="spacingAndGlyphs">B</text>
<path d="M439 346 H444 M435.5 359 H440.5 M441.5 346 L438 359" stroke="#d2d0ce" stroke-width="1.1" fill="none"/>
<path d="M461 345 V352.5 A5 5 0 0 0 471 352.5 V345" stroke="#d2d0ce" stroke-width="1.2" fill="none"/>
<path d="M460 361.5 H472" stroke="#d2d0ce" stroke-width="1.3"/>
<path d="M489 355.2 L497.3 346.2 A2 2 0 0 1 501.5 349.3 L493 358 Z M488.8 355.2 L486.5 357.5 L490 357.7" stroke="#d2d0ce" stroke-width="1.1" fill="none" stroke-linejoin="round"/>
<rect x="484.4" y="357.6" width="19" height="4.7" fill="#ffff00"/>
<path d="M508.3 351 L512.45 355.5 L516.6 351" stroke="#d2d0ce" stroke-width="1.1" fill="none"/>
<path d="M530 357 L535.1 344.6 L540.2 357 M532 352.3 H538.2" stroke="#d2d0ce" stroke-width="1.15" fill="none"/>
<rect x="525.5" y="357.6" width="18.5" height="4.8" fill="#ff0000"/>
<path d="M549.2 351 L553.35 355.5 L557.5 351" stroke="#d2d0ce" stroke-width="1.1" fill="none"/>
<rect x="567.4" y="344.70" width="3.2" height="3.2" fill="#3b94e0"/><path d="M572.4 346.3 H583.6" stroke="#d2d0ce" stroke-width="1.1"/><rect x="567.4" y="351.05" width="3.2" height="3.2" fill="#3b94e0"/><path d="M572.4 352.65000000000003 H583.6" stroke="#d2d0ce" stroke-width="1.1"/><rect x="567.4" y="357.40" width="3.2" height="3.2" fill="#3b94e0"/><path d="M572.4 359.0 H583.6" stroke="#d2d0ce" stroke-width="1.1"/>
<path d="M589.8 351 L594.1999999999999 355.6 L598.5999999999999 351" stroke="#d2d0ce" stroke-width="1.1" fill="none"/>
<text transform="translate(607.5,348.46) scale(0.25)" font-size="24" fill="#3b94e0">1</text><path d="M612.5 346.3 H624.2" stroke="#d2d0ce" stroke-width="1.1"/><text transform="translate(607.5,354.81) scale(0.25)" font-size="24" fill="#3b94e0">2</text><path d="M612.5 352.65000000000003 H624.2" stroke="#d2d0ce" stroke-width="1.1"/><text transform="translate(607.5,361.16) scale(0.25)" font-size="24" fill="#3b94e0">3</text><path d="M612.5 359.0 H624.2" stroke="#d2d0ce" stroke-width="1.1"/>
<path d="M630.5 351 L634.9 355.6 L639.3 351" stroke="#d2d0ce" stroke-width="1.1" fill="none"/>
<path d="M663 336.5 L668.2 318 L673.5 336.5 M665 330 H671.5" stroke="#d2d0ce" stroke-width="1.1" fill="none"/>
<path d="M672 330 L681.5 322 A1.4 1.4 0 0 1 683.5 324 L675 333" stroke="#d2d0ce" stroke-width="1.1" fill="#323130"/>
<path d="M667 336.8 C670 336.8 672 335.5 672.3 332.5 C673 330.5 675 330.5 675.8 332.3 C676 335 673 337.5 667 336.8 Z" fill="#3b94e0"/>
<path d="M687.2 324 L691.3000000000001 328.6 L695.4000000000001 324" stroke="#d2d0ce" stroke-width="1.1" fill="none"/>
<path d="M734.5 317.5 H750 V329 H740 L736 333 V329 H729.5 V323" stroke="#d2d0ce" stroke-width="1.1" fill="none" stroke-linejoin="round"/>
<path d="M733.5 313 V322.5 M728.8 317.7 H738.2" stroke="#5ec45e" stroke-width="1.4"/>

<g stroke="#d2d0ce" stroke-width="1" fill="none">
<path d="M412.3 431 L418.8 444.2 M421.3 431 L414.8 444.2"/>
</g>
<g stroke="#3b94e0" stroke-width="1.2" fill="none"><circle cx="413.2" cy="445" r="2"/><circle cx="420.3" cy="445" r="2"/></g>
<g stroke="#d2d0ce" stroke-width="1.1" fill="none" stroke-linejoin="round">
<path d="M413.5 460.5 H408.6 V473.8 H414"/>
<path d="M414.2 463.8 H421 L424.8 467.6 V476.5 H414.2 Z M421 463.8 V467.6 H424.8 M416.8 470.5 H422.2 M416.8 473 H422.2"/>
</g>
<path d="M413 492.7 H410.5 V506.5 H417" stroke="#f2a63a" stroke-width="1.6" fill="none"/>
<path d="M421 492.7 H423 V496" stroke="#f2a63a" stroke-width="1.6" fill="none"/>
<path d="M413.5 494.8 V492.5 H415.5 A1.6 1.6 0 0 1 418.7 492.5 H420.7 V494.8 Z" stroke="#d2d0ce" stroke-width="1" fill="#323130"/>
<rect x="417.5" y="496.8" width="8.4" height="11" stroke="#d2d0ce" stroke-width="1.1" fill="#323130"/>
<path d="M413 522.8 H410.5 V536 H417" stroke="#f2a63a" stroke-width="1.6" fill="none"/>
<path d="M421 522.8 H423 V526" stroke="#f2a63a" stroke-width="1.6" fill="none"/>
<path d="M413.5 525 V522.6 H415.5 A1.6 1.6 0 0 1 418.7 522.6 H420.7 V525 Z" stroke="#d2d0ce" stroke-width="1" fill="#323130"/>
<path d="M418 537.5 L421.8 528 L425.6 537.5 M419.4 534 H424.2" stroke="#d2d0ce" stroke-width="1.1" fill="none"/>
<g stroke="#d2d0ce" stroke-width="1.25" fill="none">
<path d="M413.20000000000005 562.5 H411.3 A3.2 3.2 0 0 1 411.3 556.1 H415.90000000000003 A3.2 3.2 0 0 1 417.40000000000003 562.1"/>
<path d="M417.6 559.1 H421.8 A3.2 3.2 0 0 1 421.8 565.5 H417.40000000000003 A3.2 3.2 0 0 1 415.3 560.1"/>
</g><g stroke="#d2d0ce" stroke-width="1.25" fill="none">
<path d="M413.20000000000005 681.6999999999999 H411.3 A3.2 3.2 0 0 1 411.3 675.3 H415.90000000000003 A3.2 3.2 0 0 1 417.40000000000003 681.3"/>
<path d="M417.6 678.3 H421.8 A3.2 3.2 0 0 1 421.8 684.6999999999999 H417.40000000000003 A3.2 3.2 0 0 1 415.3 679.3"/>
</g>
<g stroke="#d2d0ce" stroke-width="1.25" fill="none">
<path d="M413.2 710.4 H411.3 A3.2 3.2 0 0 1 411.3 704 H415.9 A3.2 3.2 0 0 1 417.3 709.8"/>
<path d="M417.6 707 H421.5 A3 3 0 0 1 423.8 708.2 M416.2 711 A3.2 3.2 0 0 0 416 713 M415.2 708.3 A3 3 0 0 1 417.4 707"/>
</g>
<path d="M416.7 710 L425.8 719.2 M425.8 710 L416.7 719.2" stroke="#d9474b" stroke-width="1.2"/>
<circle cx="419.1" cy="737.4" r="5.6" stroke="#3d93d9" stroke-width="1.2" fill="none"/>
<path d="M415 741.4 L408.3 747.8" stroke="#3d93d9" stroke-width="1.4"/>
<path d="M419.1 736 V740.5" stroke="#d2d0ce" stroke-width="1.2"/>
<circle cx="419.1" cy="734.2" r="0.75" fill="#d2d0ce"/>
<path d="M417 762.5 H424.8 V773.2 H415.5 L411.5 777 V773.2 H408.5 V767" stroke="#d2d0ce" stroke-width="1.1" fill="none" stroke-linejoin="round"/>
<path d="M411.4 759.8 V769.5 M406.5 764.7 H416.3" stroke="#5ec45e" stroke-width="1.4"/>
<path d="M409.3 809.8 L416 802.5 M410.8 811 L417.5 803.5 M409.3 809.8 L410.8 811" stroke="#d2d0ce" stroke-width="1" fill="none"/>
<path d="M415.5 802.2 C415 799.8 417 797.2 419 797 C419.6 799.3 419.2 801.8 417.3 803.3 Z" fill="#3b94e0"/>
<g stroke="#d2d0ce" stroke-width="1"><path d="M417.8 793.8 V795.6 M414 794.8 L415.3 796.2 M421.8 795 L420.5 796.3 M422 798.6 H423.5 M420.5 801.5 L422 802.8"/></g>
<rect x="403.2" y="700.2" width="116.8" height="23" stroke="#ff0000" stroke-width="3" fill="none"/>
<path d="M604.5 628.5 L536 676.5" stroke="#ff0000" stroke-width="4.6" stroke-linecap="butt"/>
<path d="M513.3 692 L530.3 668.4 L541.8 683.2 Z" fill="#ff0000"/>
<text x="403.8" y="327.9" font-size="13" fill="#f3f2f1" textLength="77.0" lengthAdjust="spacingAndGlyphs" >Calibri (Body)</text>
<text x="524.8" y="327.9" font-size="13" fill="#f3f2f1" textLength="12.0" lengthAdjust="spacingAndGlyphs" >11</text>
<text x="664.0" y="355.0" font-size="11" fill="#f3f2f1" textLength="28.8" lengthAdjust="spacingAndGlyphs" >Styles</text>
<text x="729.5" y="350.2" font-size="11" fill="#f3f2f1" textLength="21.5" lengthAdjust="spacingAndGlyphs" >New</text>
<text x="715.8" y="362.9" font-size="11" fill="#f3f2f1" textLength="49.2" lengthAdjust="spacingAndGlyphs" >Comment</text>
<text x="419.4" y="411.6" font-size="13" fill="#a19f9d" textLength="102.0" lengthAdjust="spacingAndGlyphs" >Search the menus</text>
<text x="435.2" y="444.2" font-size="13" fill="#f3f2f1" textLength="19.8" lengthAdjust="spacingAndGlyphs" >Cut</text>
<text x="589.0" y="444.2" font-size="13" fill="#f3f2f1" textLength="36.5" lengthAdjust="spacingAndGlyphs" >Ctrl+X</text>
<text x="435.2" y="474.3" font-size="13" fill="#f3f2f1" textLength="29.3" lengthAdjust="spacingAndGlyphs" >Copy</text>
<text x="589.0" y="474.3" font-size="13" fill="#f3f2f1" textLength="36.5" lengthAdjust="spacingAndGlyphs" >Ctrl+C</text>
<text x="435.2" y="504.0" font-size="13" fill="#f3f2f1" textLength="29.9" lengthAdjust="spacingAndGlyphs" >Paste</text>
<text x="588.8" y="504.0" font-size="13" fill="#f3f2f1" textLength="36.7" lengthAdjust="spacingAndGlyphs" >Ctrl+V</text>
<text x="435.2" y="533.6" font-size="13" fill="#f3f2f1" textLength="86.6" lengthAdjust="spacingAndGlyphs" >Paste Text Only</text>
<text x="553.4" y="533.6" font-size="13" fill="#f3f2f1" textLength="72.1" lengthAdjust="spacingAndGlyphs" >Ctrl+Shift+V</text>
<text x="435.2" y="565.9" font-size="13" fill="#f3f2f1" textLength="48.6" lengthAdjust="spacingAndGlyphs" >Edit Link</text>
<text x="435.2" y="595.8" font-size="13" fill="#f3f2f1" textLength="58.2" lengthAdjust="spacingAndGlyphs" >Open Link</text>
<text x="435.2" y="625.7" font-size="13" fill="#f3f2f1" textLength="56.2" lengthAdjust="spacingAndGlyphs" >Copy Link</text>
<text x="435.2" y="655.7" font-size="13" fill="#f3f2f1" textLength="60.8" lengthAdjust="spacingAndGlyphs" >Select Link</text>
<text x="435.2" y="685.5" font-size="13" fill="#f3f2f1" textLength="22.9" lengthAdjust="spacingAndGlyphs" >Link</text>
<text x="435.2" y="715.3" font-size="13" fill="#f3f2f1" textLength="72.9" lengthAdjust="spacingAndGlyphs" >Remove Link</text>
<text x="435.2" y="744.9" font-size="13" fill="#f3f2f1" textLength="120.9" lengthAdjust="spacingAndGlyphs" >Search &quot;dummy text&quot;</text>
<text x="435.2" y="774.7" font-size="13" fill="#f3f2f1" textLength="86.0" lengthAdjust="spacingAndGlyphs" >New Comment</text>
<text x="435.2" y="807.6" font-size="13" fill="#f3f2f1" textLength="157.6" lengthAdjust="spacingAndGlyphs" >Add visual emphasis to text</text>
</svg>

</body></html>
